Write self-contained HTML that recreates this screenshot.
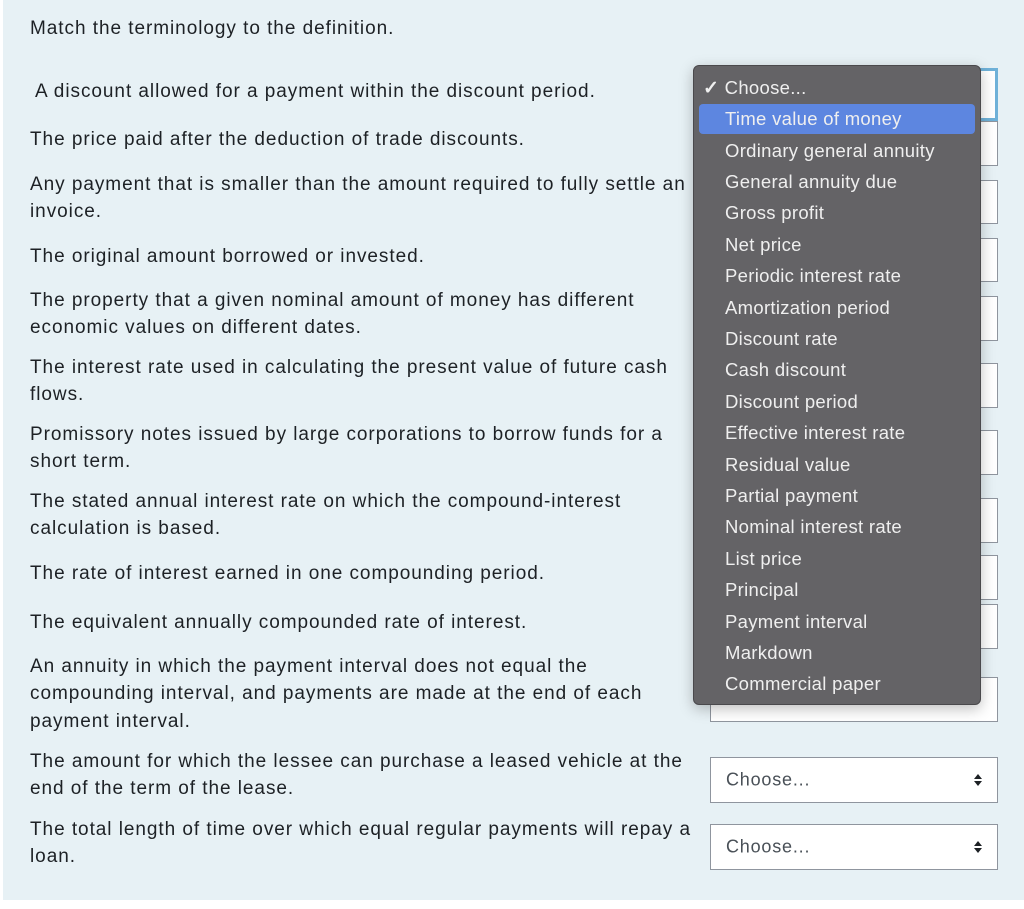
<!DOCTYPE html>
<html><head><meta charset="utf-8">
<style>
html,body{margin:0;padding:0;width:1024px;height:909px;overflow:hidden;background:#fff;}
.panel{position:absolute;left:3px;top:0;width:1021px;height:900px;background:#e7f1f5;}
.t{position:absolute;left:30px;font-family:"Liberation Sans",sans-serif;font-size:19px;letter-spacing:0.95px;color:#1d2125;white-space:nowrap;line-height:22px;}
.box{position:absolute;left:710px;width:288px;background:#fff;border:1px solid #8f959e;box-sizing:border-box;}
.box .c{position:absolute;left:15px;top:50%;transform:translateY(-50%);font-family:"Liberation Sans",sans-serif;font-size:18px;color:#495057;letter-spacing:0.8px;}
.arr{position:absolute;right:15px;top:50%;transform:translateY(-50%);width:8px;height:12px;}
.dd{position:absolute;left:693px;top:65px;width:288px;height:640px;background:#646366;border:1px solid #4a494c;border-radius:6px;box-sizing:border-box;box-shadow:0 4px 14px rgba(0,0,0,0.25);}
.it{position:absolute;left:31px;font-family:"Liberation Sans",sans-serif;font-size:18.5px;letter-spacing:0.3px;color:#efefef;line-height:22px;white-space:nowrap;}
.hl{position:absolute;left:5px;top:38px;width:276px;height:30px;background:#5d86e0;border-radius:4px;}
</style></head><body>
<div class="panel"></div>
<div class="t" style="top:18px">Match the terminology to the definition.</div>
<div class="t" style="top:81px;left:35px">A discount allowed for a payment within the discount period.</div>
<div class="t" style="top:129px">The price paid after the deduction of trade discounts.</div>
<div class="t" style="top:174px">Any payment that is smaller than the amount required to fully settle an</div>
<div class="t" style="top:201px">invoice.</div>
<div class="t" style="top:246px">The original amount borrowed or invested.</div>
<div class="t" style="top:290px">The property that a given nominal amount of money has different</div>
<div class="t" style="top:317px">economic values on different dates.</div>
<div class="t" style="top:357px">The interest rate used in calculating the present value of future cash</div>
<div class="t" style="top:384px">flows.</div>
<div class="t" style="top:424px">Promissory notes issued by large corporations to borrow funds for a</div>
<div class="t" style="top:451px">short term.</div>
<div class="t" style="top:491px">The stated annual interest rate on which the compound-interest</div>
<div class="t" style="top:518px">calculation is based.</div>
<div class="t" style="top:563px">The rate of interest earned in one compounding period.</div>
<div class="t" style="top:612px">The equivalent annually compounded rate of interest.</div>
<div class="t" style="top:656px">An annuity in which the payment interval does not equal the</div>
<div class="t" style="top:683px">compounding interval, and payments are made at the end of each</div>
<div class="t" style="top:711px">payment interval.</div>
<div class="t" style="top:751px">The amount for which the lessee can purchase a leased vehicle at the</div>
<div class="t" style="top:778px">end of the term of the lease.</div>
<div class="t" style="top:819px">The total length of time over which equal regular payments will repay a</div>
<div class="t" style="top:846px">loan.</div>

<div class="box" style="top:68px;height:53px;border:3px solid #6fb1d8;"></div>
<div class="box" style="top:121px;height:45px"></div>
<div class="box" style="top:180px;height:44px"></div>
<div class="box" style="top:238px;height:44px"></div>
<div class="box" style="top:296px;height:45px"></div>
<div class="box" style="top:363px;height:45px"></div>
<div class="box" style="top:430px;height:45px"></div>
<div class="box" style="top:498px;height:45px"></div>
<div class="box" style="top:555px;height:45px"></div>
<div class="box" style="top:604px;height:45px"></div>
<div class="box" style="top:677px;height:45px"></div>
<div class="box" style="top:757px;height:46px"><span class="c">Choose...</span><svg class="arr" viewBox="0 0 8 12"><path d="M0 5L4 0L8 5Z M0 7L4 12L8 7Z" fill="#1d2125"/></svg></div>
<div class="box" style="top:824px;height:46px"><span class="c">Choose...</span><svg class="arr" viewBox="0 0 8 12"><path d="M0 5L4 0L8 5Z M0 7L4 12L8 7Z" fill="#1d2125"/></svg></div>

<div class="dd">
<div class="hl"></div>
<div class="it" style="top:11px;left:9px"><b style="font-size:19px">✓</b> Choose...</div>
<div class="it" style="top:42px">Time value of money</div>
<div class="it" style="top:74px">Ordinary general annuity</div>
<div class="it" style="top:105px">General annuity due</div>
<div class="it" style="top:136px">Gross profit</div>
<div class="it" style="top:168px">Net price</div>
<div class="it" style="top:199px">Periodic interest rate</div>
<div class="it" style="top:231px">Amortization period</div>
<div class="it" style="top:262px">Discount rate</div>
<div class="it" style="top:293px">Cash discount</div>
<div class="it" style="top:325px">Discount period</div>
<div class="it" style="top:356px">Effective interest rate</div>
<div class="it" style="top:388px">Residual value</div>
<div class="it" style="top:419px">Partial payment</div>
<div class="it" style="top:450px">Nominal interest rate</div>
<div class="it" style="top:482px">List price</div>
<div class="it" style="top:513px">Principal</div>
<div class="it" style="top:545px">Payment interval</div>
<div class="it" style="top:576px">Markdown</div>
<div class="it" style="top:607px">Commercial paper</div>
</div>
</body></html>
